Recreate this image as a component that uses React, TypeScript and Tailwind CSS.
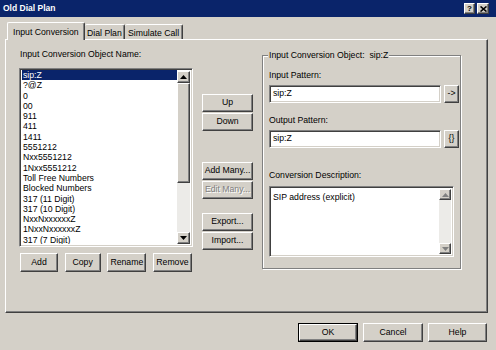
import { ReactNode } from 'react'

const raised =
  'border border-t-white border-l-white border-r-[#404040] border-b-[#404040] shadow-[inset_-1px_-1px_0_#808080] bg-[#d4d0c8]'
const sunken =
  'border border-t-[#808080] border-l-[#808080] border-r-white border-b-white shadow-[inset_1px_1px_0_#404040,inset_-1px_-1px_0_#d4d0c8]'

const items = [
  'sip:Z',
  '?@Z',
  '0',
  '00',
  '911',
  '411',
  '1411',
  '5551212',
  'Nxx5551212',
  '1Nxx5551212',
  'Toll Free Numbers',
  'Blocked Numbers',
  '317 (11 Digit)',
  '317 (10 Digit)',
  'NxxNxxxxxxZ',
  '1NxxNxxxxxxZ',
  '317 (7 Digit)',
]

function Btn({ children, className = '', disabled = false }: { children: ReactNode; className?: string; disabled?: boolean }) {
  return (
    <div
      className={`${raised} flex items-center justify-center h-[18px] ${className} ${
        disabled ? 'text-[#808080] [text-shadow:1px_1px_0_#fff]' : ''
      }`}
    >
      {children}
    </div>
  )
}

function Arrow({ up, gray = false }: { up?: boolean; gray?: boolean }) {
  return (
    <svg width="7" height="4" viewBox="0 0 7 4">
      <polygon points={up ? '3.5,0 7,4 0,4' : '0,0 7,0 3.5,4'} fill={gray ? '#808080' : '#000'} />
    </svg>
  )
}

function Label({ children, className = '' }: { children: ReactNode; className?: string }) {
  return <div className={`h-[11px] leading-[11px] whitespace-nowrap ${className}`}>{children}</div>
}

export default function App() {
  return (
    <div className="w-[496px] h-[350px] bg-[#d4d0c8] flex flex-col overflow-hidden text-black text-[8.7px] font-['Liberation_Sans',Arial,sans-serif]">
      {/* title bar */}
      <div className="h-[17px] bg-[#0a246a] flex items-center pl-[3px] pr-[7px] shrink-0">
        <span className="flex-1 text-white font-bold text-[8.5px]">Old Dial Plan</span>
        <div className="flex gap-[2px]">
          <div className={`${raised} w-[11px] h-[11px] flex items-center justify-center font-bold text-[8px] leading-none`}>?</div>
          <div className={`${raised} w-[12px] h-[11px] flex items-center justify-center`}>
            <svg width="7" height="6" viewBox="0 0 7 6">
              <path d="M0.5 0.5 L6.5 5.5 M6.5 0.5 L0.5 5.5" stroke="#000" strokeWidth="1.6" />
            </svg>
          </div>
        </div>
      </div>

      <div className="flex flex-col pl-[5px] pr-[8px] pt-[5px]">
        {/* tabs */}
        <div className="flex items-end h-[17px] pl-[2px]">
          <div className="relative z-10 -mb-px h-[18px] w-[78px] bg-[#d4d0c8] border-l border-t border-l-white border-t-white border-r border-r-[#404040] shadow-[inset_-1px_0_0_#808080] flex items-start pt-[3px] pl-[5px] rounded-t-[2px] whitespace-nowrap">
            Input Conversion
          </div>
          <div className="h-[15px] w-[40px] border-t border-t-white border-r border-r-[#404040] shadow-[inset_-1px_0_0_#808080] flex items-start pt-[2px] pl-[2px] rounded-t-[2px] whitespace-nowrap">
            Dial Plan
          </div>
          <div className="h-[15px] w-[58px] border-t border-t-white border-r border-r-[#404040] shadow-[inset_-1px_0_0_#808080] flex items-start pt-[2px] pl-[3px] rounded-t-[2px] whitespace-nowrap">
            Simulate Call
          </div>
        </div>

        {/* tab panel */}
        <div className={`${raised} h-[274px] flex pl-[13px] pt-[9px]`}>
          {/* left column */}
          <div className="w-[174px] flex flex-col">
            <Label className="pl-[1px]">Input Conversion Object Name:</Label>
            <div className={`${sunken} mt-[8px] h-[179px] bg-white flex px-[2px] pt-[1px] pb-[2px]`}>
              <div className="flex-1 flex flex-col overflow-hidden">
                {items.map((it, i) => (
                  <div
                    key={it}
                    className={`h-[10.3px] leading-[10.3px] pl-[1px] whitespace-nowrap shrink-0 ${
                      i === 0 ? 'bg-[#0a246a] text-white' : ''
                    }`}
                  >
                    {it}
                  </div>
                ))}
              </div>
              <div className="w-[13px] flex flex-col bg-[#ecebe8] mt-[1px]">
                <div className={`${raised} h-[12px] flex items-center justify-center shrink-0`}>
                  <Arrow up />
                </div>
                <div className={`${raised} h-[100px] shrink-0`} />
                <div className="flex-1" />
                <div className={`${raised} h-[12px] flex items-center justify-center shrink-0`}>
                  <Arrow />
                </div>
              </div>
            </div>
            <div className="mt-[6px] h-[19px] flex justify-between px-[1px]">
              <Btn className="w-[38px] h-[19px]">Add</Btn>
              <Btn className="w-[36px] h-[19px]">Copy</Btn>
              <Btn className="w-[39px] h-[19px]">Rename</Btn>
              <Btn className="w-[39px] h-[19px]">Remove</Btn>
            </div>
          </div>

          {/* middle buttons */}
          <div className="ml-[9px] w-[51px] flex flex-col pt-[45px]">
            <Btn>Up</Btn>
            <Btn className="mt-[1px]">Down</Btn>
            <Btn className="mt-[31px]">Add Many...</Btn>
            <Btn className="mt-[1px]" disabled>
              Edit Many...
            </Btn>
            <Btn className="mt-[14px]">Export...</Btn>
            <Btn className="mt-[1px]">Import...</Btn>
          </div>

          {/* group box */}
          <div className="ml-[9px] mt-[6px] w-[199px] h-[214px] relative border border-[#808080] shadow-[1px_1px_0_#fff,inset_1px_1px_0_#fff] flex flex-col pl-[6px]">
            <div className="absolute -top-[6px] left-[5px] px-[1px] bg-[#d4d0c8] leading-[11px] whitespace-nowrap">
              Input Conversion Object:&nbsp; sip:Z
            </div>
            <Label className="mt-[14px]">Input Pattern:</Label>
            <div className="mt-[4px] flex">
              <div className={`${sunken} bg-white w-[172px] h-[18px] flex items-center pl-[3px]`}>sip:Z</div>
              <Btn className="ml-[3px] w-[15px]">-&gt;</Btn>
            </div>
            <Label className="mt-[12px]">Output Pattern:</Label>
            <div className="mt-[4px] flex">
              <div className={`${sunken} bg-white w-[172px] h-[18px] flex items-center pl-[3px]`}>sip:Z</div>
              <Btn className="ml-[3px] w-[15px]">{'{}'}</Btn>
            </div>
            <Label className="mt-[22px]">Conversion Description:</Label>
            <div className={`${sunken} mt-[5px] bg-white w-[185px] h-[71px] flex p-[2px]`}>
              <div className="flex-1 pl-[1px] pt-[3px] leading-[11px]">SIP address (explicit)</div>
              <div className="w-[12px] flex flex-col bg-[#ecebe8]">
                <div className={`${raised} h-[11px] flex items-center justify-center shrink-0`}>
                  <Arrow up gray />
                </div>
                <div className="flex-1" />
                <div className={`${raised} h-[11px] flex items-center justify-center shrink-0`}>
                  <Arrow gray />
                </div>
              </div>
            </div>
          </div>
        </div>
      </div>

      {/* dialog buttons */}
      <div className="mt-[10px] flex justify-end gap-[5px] pr-[9px]">
        <div className="w-[60px] h-[19px] border border-black flex">
          <Btn className="flex-1 h-full">OK</Btn>
        </div>
        <Btn className="w-[60px] h-[19px]">Cancel</Btn>
        <Btn className="w-[59px] h-[19px]">Help</Btn>
      </div>
    </div>
  )
}
